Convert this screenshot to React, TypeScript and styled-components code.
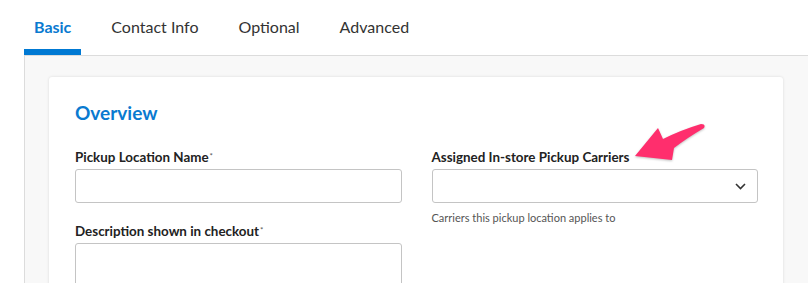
import React from 'react';
import styled, { createGlobalStyle } from 'styled-components';

const GlobalStyle = createGlobalStyle`
  body {
    margin: 0;
    background: #ffffff;
    font-family: Lato, 'Open Sans', Arial, sans-serif;
    color: #222;
  }
`;

const Page = styled.div`
  position: relative;
  width: 808px;
  height: 283px;
  overflow: hidden;
`;

const TabBar = styled.div`
  display: flex;
  padding-left: 24px;
  height: 55px;
  gap: 20px;
`;

const Tab = styled.div<{ $active?: boolean }>`
  display: flex;
  align-items: center;
  padding: 4px 10px 0;
  height: 55px;
  box-sizing: border-box;
  font-size: 16px;
  font-weight: ${(p) => (p.$active ? 700 : 400)};
  color: ${(p) => (p.$active ? '#0a7ad0' : '#333')};
  border-bottom: 6px solid ${(p) => (p.$active ? '#0079d3' : 'transparent')};
`;

const Panel = styled.div`
  margin-left: 24px;
  border: 1px solid #dcdcdc;
  border-right: none;
  background: #f8f8f8;
  padding: 21px 25px 0 24px;
  height: 260px;
  box-sizing: border-box;
`;

const Card = styled.div`
  background: #fff;
  border-radius: 3px;
  box-shadow: 0 0 3px rgba(0, 0, 0, 0.12);
  padding: 24px 25px 20px 26px;
  height: 260px;
  box-sizing: border-box;
`;

const Heading = styled.h2`
  margin: 0 0 24px;
  font-size: 19px;
  line-height: 24px;
  font-weight: 700;
  color: #0a7ad0;
`;

const Grid = styled.div`
  display: grid;
  grid-template-columns: 1fr 1fr;
  column-gap: 30px;
  align-items: start;
`;

const Field = styled.div`
  display: flex;
  flex-direction: column;
  margin-bottom: 20px;
`;

const Label = styled.label`
  display: block;
  height: 16px;
  font-size: 13.4px;
  line-height: 16px;
  font-weight: 700;
  color: #222;
  margin-bottom: 4px;
`;

const Req = styled.span`
  font-size: 8px;
  line-height: 0;
  vertical-align: 3px;
  margin-left: 1px;
  font-weight: 400;
  color: #555;
`;

const TextInput = styled.div<{ $tall?: boolean }>`
  height: ${(p) => (p.$tall ? '70px' : '34px')};
  border: 1px solid #c4c4c4;
  border-radius: 3px;
  box-sizing: border-box;
  background: #fff;
`;

const Select = styled.div`
  height: 34px;
  border: 1px solid #c4c4c4;
  border-radius: 3px;
  box-sizing: border-box;
  display: flex;
  align-items: center;
  justify-content: flex-end;
  padding-right: 11px;
  background: #fff;
`;

const Help = styled.div`
  margin-top: 8px;
  font-size: 11px;
  line-height: 13px;
  color: #555;
`;

const Arrow = styled.svg`
  position: absolute;
  left: 629px;
  top: 116px;
  filter: drop-shadow(0 1px 1px rgba(0, 0, 0, 0.25));
`;

const Chevron = () => (
  <svg width="11" height="7" viewBox="0 0 11 7">
    <path d="M1 1 L5.5 5.5 L10 1" fill="none" stroke="#333" strokeWidth="1.6" />
  </svg>
);

export default function App() {
  return (
    <Page>
      <GlobalStyle />
      <TabBar>
        <Tab $active>Basic</Tab>
        <Tab>Contact Info</Tab>
        <Tab>Optional</Tab>
        <Tab>Advanced</Tab>
      </TabBar>
      <Panel>
        <Card>
          <Heading>Overview</Heading>
          <Grid>
            <div>
              <Field>
                <Label>
                  Pickup Location Name<Req>*</Req>
                </Label>
                <TextInput />
              </Field>
              <Field>
                <Label>
                  Description shown in checkout<Req>*</Req>
                </Label>
                <TextInput $tall />
              </Field>
            </div>
            <div>
              <Field>
                <Label>Assigned In-store Pickup Carriers</Label>
                <Select>
                  <Chevron />
                </Select>
                <Help>Carriers this pickup location applies to</Help>
              </Field>
            </div>
          </Grid>
        </Card>
      </Panel>
      <Arrow width="90" height="45" viewBox="0 0 90 45">
        <path
          d="M6 40 L29 12 L34 23 Q52 14 72 8 Q77 8 75 12 Q58 22 45 32 L43 44 Z"
          fill="#ff2e6d"
        />
      </Arrow>
    </Page>
  );
}
